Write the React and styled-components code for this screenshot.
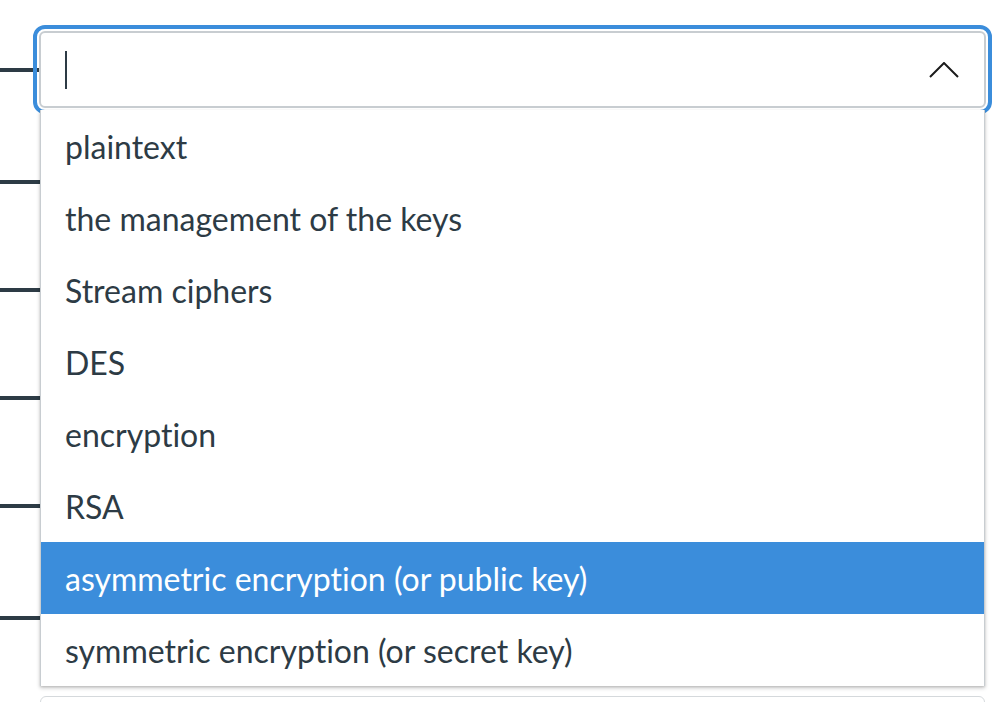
import React from "react";
import styled, { createGlobalStyle } from "styled-components";

const Global = createGlobalStyle`
  html, body { margin: 0; padding: 0; background: #ffffff; }
  body { font-family: "Lato", "Noto Sans", sans-serif; }
`;

const Page = styled.div`
  position: relative;
  width: 994px;
  height: 702px;
  overflow: hidden;
  display: grid;
  grid-template: 1fr / 1fr;
`;

const Connectors = styled.div`
  grid-area: 1 / 1;
  display: flex;
  flex-direction: column;
  padding-top: 68px;
`;

const Connector = styled.div`
  width: 40px;
  height: 4px;
  background: #2d3b45;
  margin-top: ${(p) => p.$gap || 0}px;
`;

const FieldLayer = styled.div`
  grid-area: 1 / 1;
  position: relative;
  padding: 31px 8px 0 39px;
`;

const InputBox = styled.div`
  box-sizing: border-box;
  height: 77px;
  border: 2px solid #c8cdd1;
  border-radius: 6px;
  outline: 4px solid #3b8ddb;
  outline-offset: 2px;
  background: #fff;
  display: flex;
  align-items: center;
  justify-content: space-between;
  padding: 0 24px;
`;

const Caret = styled.span`
  display: block;
  width: 2px;
  height: 38px;
  background: #2d3b45;
`;

const Chevron = styled.svg`
  display: block;
  width: 30px;
  height: 16px;
  margin-right: 1px;
`;

const NextField = styled.div`
  box-sizing: border-box;
  margin: 588px 1px 0 1px;
  height: 40px;
  border: 1px solid #d5d9dc;
  border-radius: 6px;
`;

const Menu = styled.ul`
  position: absolute;
  top: 110px;
  left: 40px;
  width: 945px;
  box-sizing: border-box;
  margin: 0;
  padding: 0;
  list-style: none;
  background: #fff;
  border-left: 1px solid #c8cdd1;
  border-right: 1px solid #c8cdd1;
  box-shadow: 0 2px 4px rgba(0, 0, 0, 0.22), 0 1px 2px rgba(0, 0, 0, 0.1);
`;

const Option = styled.li`
  height: 72px;
  display: flex;
  align-items: center;
  padding-left: 24px;
  font-family: "Lato", "Noto Sans", sans-serif;
  font-size: 32px;
  font-variant-ligatures: none;
  color: ${(p) => (p.$active ? "#ffffff" : "#2d3b45")};
  background: ${(p) => (p.$active ? "#3b8ddb" : "transparent")};
  white-space: nowrap;
`;

const options = [
  "plaintext",
  "the management of the keys",
  "Stream ciphers",
  "DES",
  "encryption",
  "RSA",
  "asymmetric encryption (or public key)",
  "symmetric encryption (or secret key)",
];

export default function App() {
  return (
    <>
      <Global />
      <Page>
        <Connectors>
          <Connector />
          <Connector $gap={108} />
          <Connector $gap={104} />
          <Connector $gap={104} />
          <Connector $gap={104} />
          <Connector $gap={108} />
        </Connectors>
        <FieldLayer>
          <InputBox>
            <Caret />
            <Chevron viewBox="0 0 30 16" fill="none">
              <path d="M1 15 L15 1 L29 15" stroke="#1b1b1b" strokeWidth="2" />
            </Chevron>
          </InputBox>
          <NextField />
          <Menu>
            {options.map((o, i) => (
              <Option key={o} $active={i === 6}>
                {o}
              </Option>
            ))}
          </Menu>
        </FieldLayer>
      </Page>
    </>
  );
}
